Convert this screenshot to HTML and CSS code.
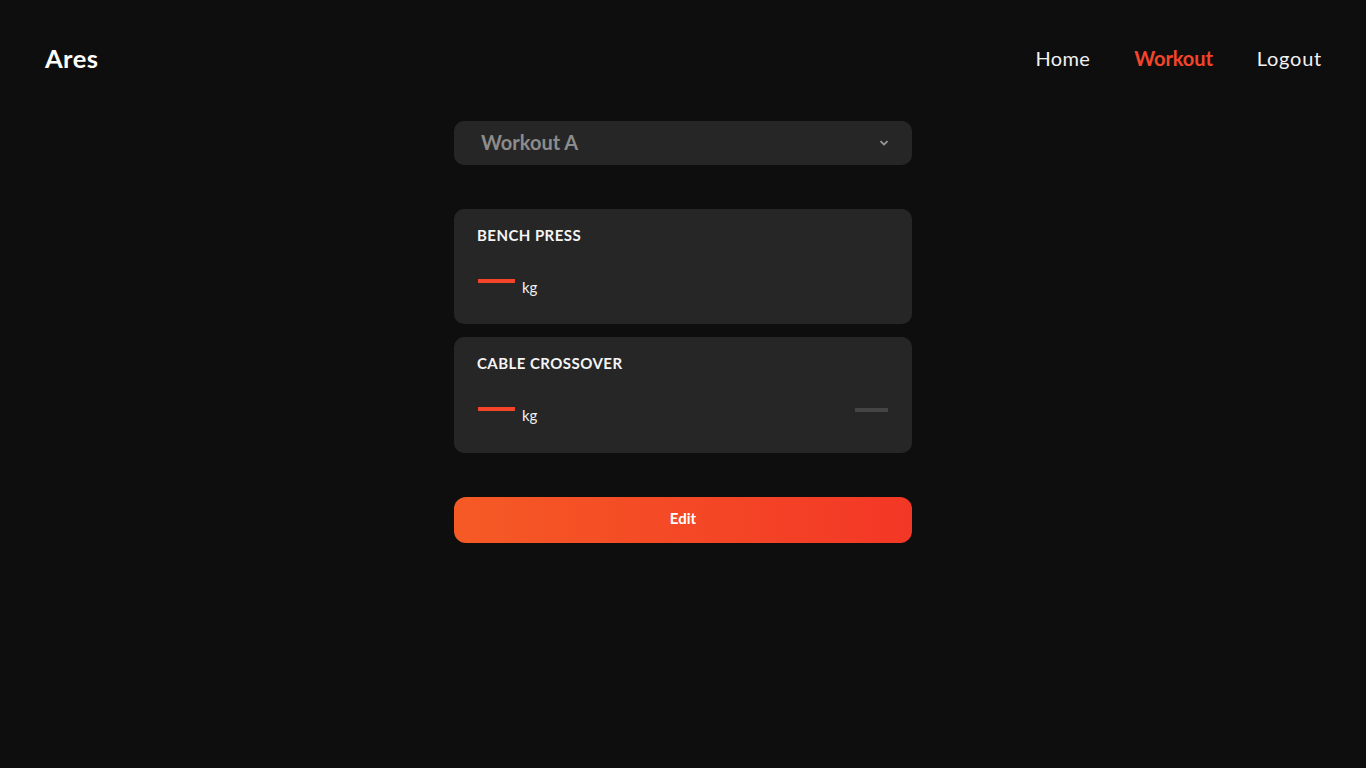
FILE: index.html
```html
<!DOCTYPE html>
<html lang="en">
<head>
<meta charset="utf-8">
<title>Ares</title>
<link rel="stylesheet" href="styles.css">
</head>
<body>
<header class="topbar">
  <div class="logo">Ares</div>
  <nav class="nav">
    <a class="nav-link" href="#">Home</a>
    <a class="nav-link active" href="#">Workout</a>
    <a class="nav-link nav-wide" href="#">Logout</a>
  </nav>
</header>
<main class="main">
  <div class="select">
    <span class="select-text">Workout A</span>
    <svg class="chevron" width="10" height="6" viewBox="0 0 10 6"><path d="M1.5 1.2 L5 4.6 L8.5 1.2" fill="none" stroke="#9a9a9a" stroke-width="1.8"/></svg>
  </div>
  <div class="cards">
    <section class="card">
      <h2 class="card-title">BENCH PRESS</h2>
      <div class="card-row">
        <div class="set">
          <span class="weight-line"></span>
          <span class="unit">kg</span>
        </div>
      </div>
    </section>
    <section class="card card-tall">
      <h2 class="card-title">CABLE CROSSOVER</h2>
      <div class="card-row">
        <div class="set">
          <span class="weight-line"></span>
          <span class="unit">kg</span>
        </div>
        <span class="gray-line"></span>
      </div>
    </section>
  </div>
  <button class="edit-btn">Edit</button>
</main>
</body>
</html>
```
FILE: styles.css
```css
* { box-sizing: border-box; }
html, body { margin: 0; padding: 0; }
body {
  background: #0e0e0e;
  color: #ffffff;
  font-family: Lato, "Open Sans", sans-serif;
  min-height: 768px;
}
.topbar {
  display: flex;
  justify-content: space-between;
  align-items: center;
  padding: 39px 44px 0 45px;
  height: 76px;
}
.logo {
  font-size: 25.5px;
  font-weight: 700;
  letter-spacing: 0.4px;
}
.nav {
  display: flex;
  gap: 44px;
}
.nav-link {
  color: #f2f2f2;
  text-decoration: none;
  font-size: 20px;
  font-weight: 400;
  letter-spacing: 0.4px;
}
.nav-link.active {
  color: #f4452a;
  font-weight: 700;
  letter-spacing: -0.1px;
}
.nav-link.nav-wide {
  letter-spacing: 0.75px;
}
.main {
  width: 458px;
  margin: 45px auto 0;
  display: flex;
  flex-direction: column;
}
.select {
  height: 44px;
  background: #262626;
  border-radius: 10px;
  display: flex;
  align-items: center;
  justify-content: space-between;
  padding: 0 23px 2px 27px;
}
.select-text {
  color: #8c8c8c;
  font-size: 20px;
  font-weight: 700;
}
.chevron { display: block; margin-top: 2px; }
.cards {
  margin-top: 44px;
  display: flex;
  flex-direction: column;
  gap: 13px;
}
.card {
  background: #262626;
  border-radius: 10px;
  height: 115px;
  padding: 18px 24px 0 23px;
}
.card-tall { height: 116px; }
.card-title {
  margin: 0;
  font-size: 15px;
  font-weight: 700;
  line-height: 16px;
  letter-spacing: 0.45px;
  color: #f5f5f5;
}
.card-row {
  margin-top: 35px;
  display: flex;
  justify-content: space-between;
  align-items: flex-start;
}
.set {
  display: flex;
  align-items: flex-start;
  padding-left: 1px;
}
.weight-line {
  display: block;
  width: 37px;
  height: 4px;
  background: #f4452a;
  margin-top: 1px;
}
.unit {
  margin-left: 7px;
  margin-top: 1px;
  font-size: 15px;
  line-height: 16px;
  color: #f0f0f0;
}
.gray-line {
  display: block;
  width: 33px;
  height: 4px;
  background: #444444;
  margin-top: 2px;
}
.edit-btn {
  margin-top: 44px;
  height: 46px;
  border: none;
  border-radius: 12px;
  background: linear-gradient(90deg, #f55a25 0%, #f33726 100%);
  color: #fff;
  font-family: Lato, "Open Sans", sans-serif;
  font-size: 15px;
  font-weight: 700;
  padding: 0 0 4px;
  cursor: pointer;
}
```
